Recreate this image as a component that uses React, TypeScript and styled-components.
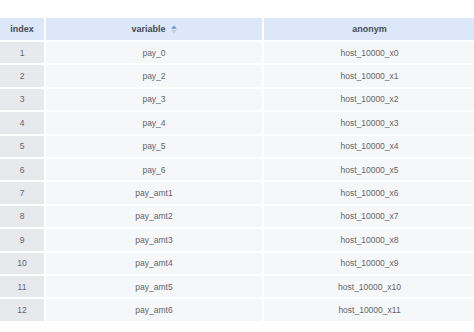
import React from 'react';
import styled, { createGlobalStyle } from 'styled-components';

const GlobalStyle = createGlobalStyle`
  html, body {
    margin: 0;
    padding: 0;
    background: #ffffff;
    font-family: "Liberation Sans", Arial, sans-serif;
  }
`;

const Page = styled.div`
  width: 474px;
  height: 332px;
  padding-top: 18px;
  box-sizing: border-box;
  overflow: hidden;
`;

const Grid = styled.div`
  display: grid;
  grid-template-columns: 44px 216px 211px;
  grid-auto-rows: 21.4px;
  grid-template-rows: 22px;
  column-gap: 2px;
  row-gap: 2px;
`;

const HeaderCell = styled.div`
  background: #dce7fa;
  color: #454b56;
  font-size: 9px;
  font-weight: bold;
  display: flex;
  align-items: center;
  justify-content: center;
  gap: 5px;
`;

const Cell = styled.div<{ $index?: boolean }>`
  background: ${(p) => (p.$index ? '#e8e9ec' : '#f6f7f9')};
  color: #62666c;
  font-size: 8.5px;
  display: flex;
  align-items: center;
  justify-content: center;
`;

const SortIcon = () => (
  <svg width="6" height="9" viewBox="0 0 6 9">
    <path d="M3 0.5 L5.8 3.8 L0.2 3.8 Z" fill="#6f8fd8" />
    <path d="M3 8.5 L5.8 5.2 L0.2 5.2 Z" fill="#c3cde0" />
  </svg>
);

const rows: [string, string][] = [
  ['pay_0', 'host_10000_x0'],
  ['pay_2', 'host_10000_x1'],
  ['pay_3', 'host_10000_x2'],
  ['pay_4', 'host_10000_x3'],
  ['pay_5', 'host_10000_x4'],
  ['pay_6', 'host_10000_x5'],
  ['pay_amt1', 'host_10000_x6'],
  ['pay_amt2', 'host_10000_x7'],
  ['pay_amt3', 'host_10000_x8'],
  ['pay_amt4', 'host_10000_x9'],
  ['pay_amt5', 'host_10000_x10'],
  ['pay_amt6', 'host_10000_x11'],
];

export default function App() {
  return (
    <Page>
      <GlobalStyle />
      <Grid>
        <HeaderCell>index</HeaderCell>
        <HeaderCell>
          variable <SortIcon />
        </HeaderCell>
        <HeaderCell>anonym</HeaderCell>
        {rows.map(([variable, anonym], i) => (
          <React.Fragment key={variable}>
            <Cell $index>{i + 1}</Cell>
            <Cell>{variable}</Cell>
            <Cell>{anonym}</Cell>
          </React.Fragment>
        ))}
      </Grid>
    </Page>
  );
}
